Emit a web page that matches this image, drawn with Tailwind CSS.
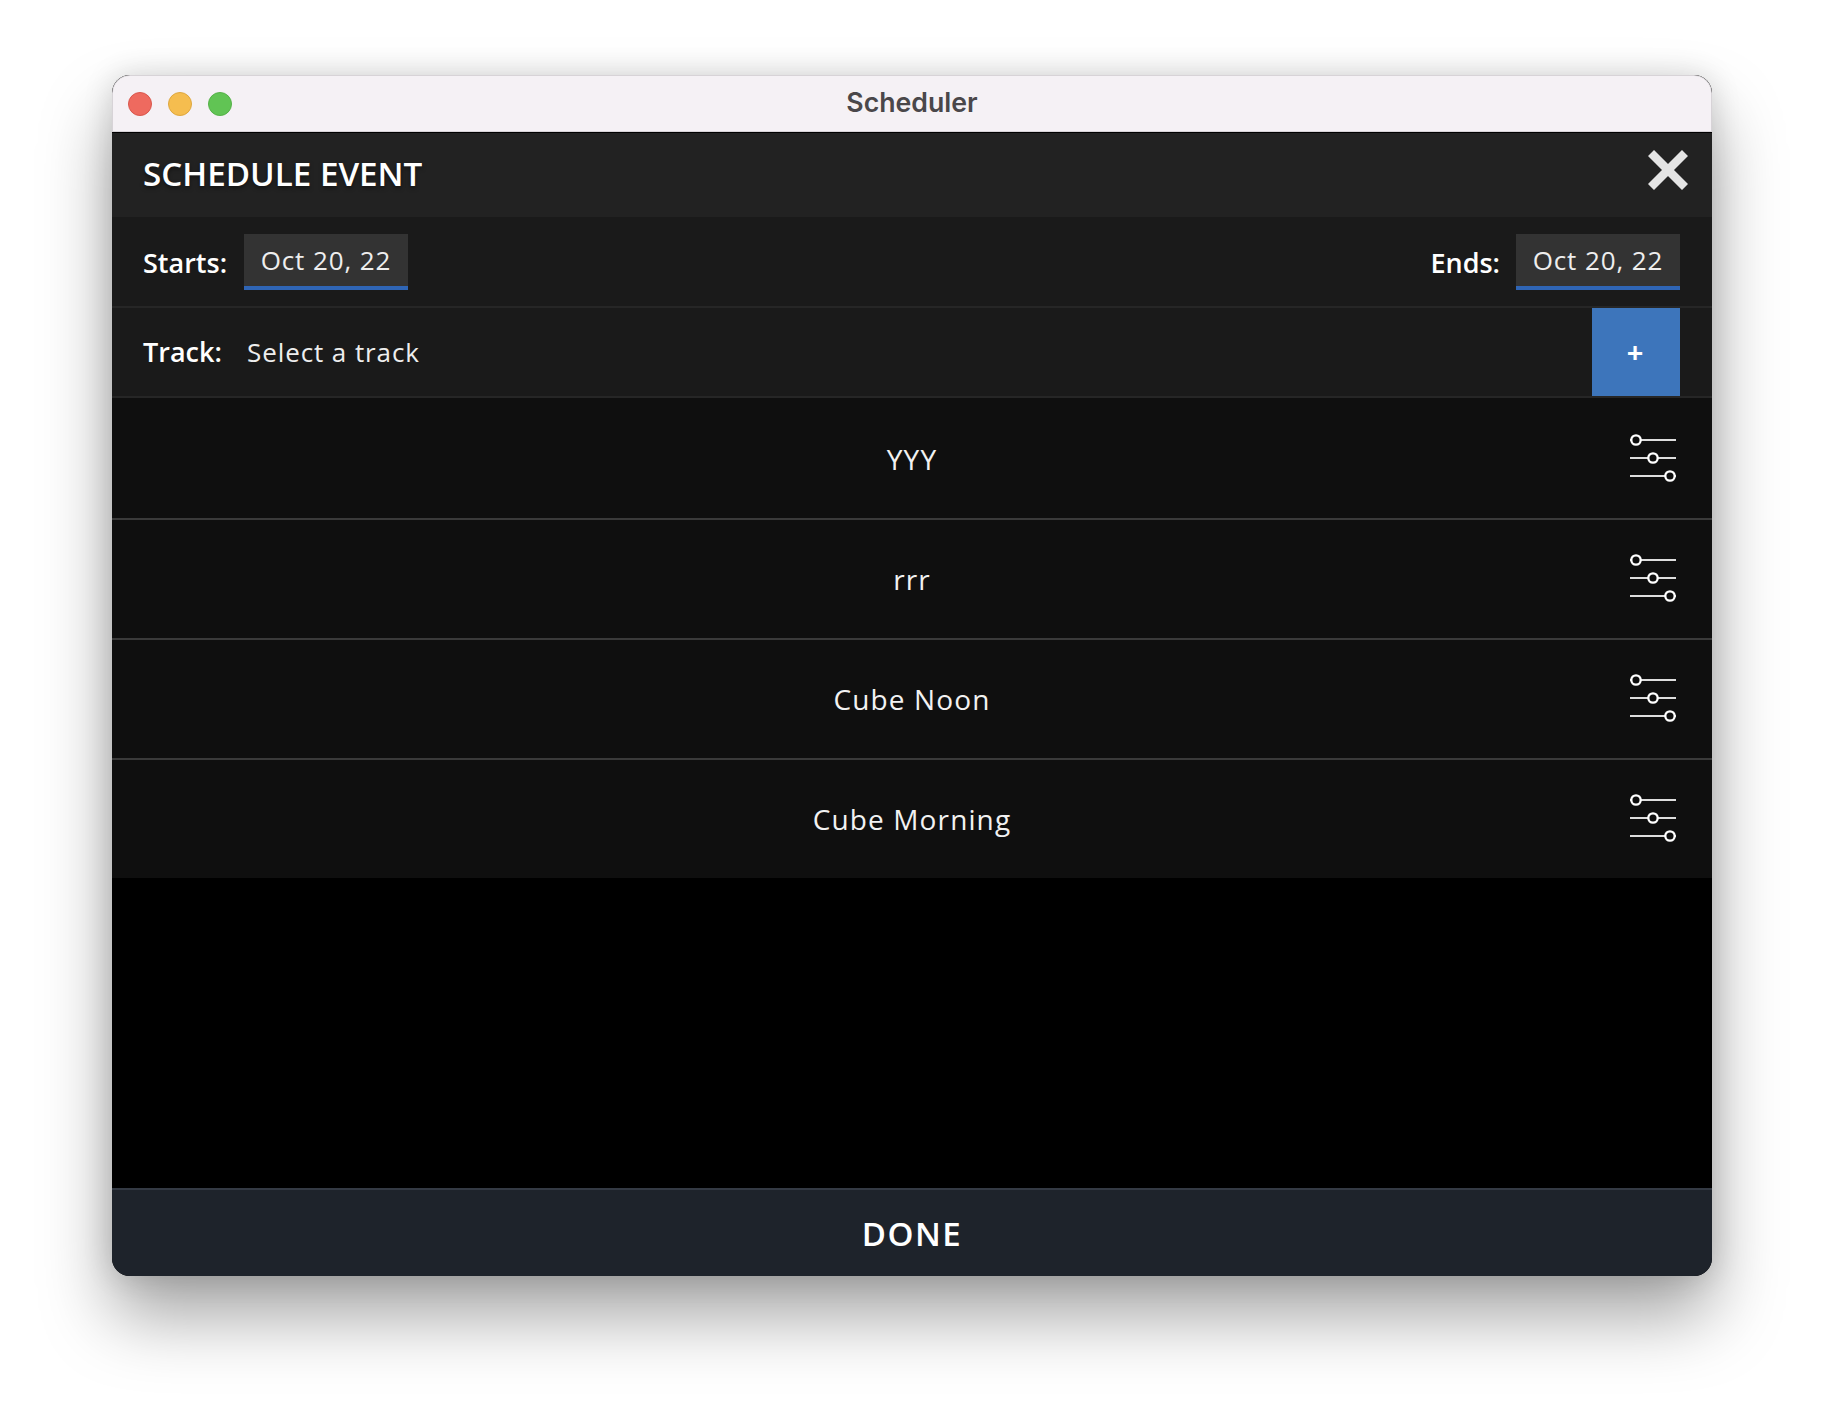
<!DOCTYPE html>
<html lang="en">
<head>
  <meta charset="UTF-8" />
  <title>Scheduler</title>
  <script src="https://cdn.jsdelivr.net/npm/@tailwindcss/browser@4"></script>
</head>
<body class="bg-white min-h-screen font-['Open_Sans',sans-serif] text-white">
  <div class="pt-[75px] pl-[112px]">
    <div class="w-[1600px] h-[1201px] flex flex-col rounded-[18px] overflow-hidden bg-black shadow-[0_40px_70px_rgba(0,0,0,0.36),0_0_30px_rgba(0,0,0,0.14)]">

      <!-- title bar -->
      <div class="relative h-[58px] shrink-0 flex items-center justify-center bg-[#f5f1f5] border-b border-black rounded-t-[18px] shadow-[inset_0_0_0_1px_rgba(0,0,0,0.12)]">
        <div class="absolute left-[16px] top-[17px] flex gap-[16px]">
          <span class="w-[24px] h-[24px] rounded-full bg-[#ee6a5f] border border-[#d9574d]"></span>
          <span class="w-[24px] h-[24px] rounded-full bg-[#f5bd4f] border border-[#dea73f]"></span>
          <span class="w-[24px] h-[24px] rounded-full bg-[#61c454] border border-[#55b148]"></span>
        </div>
        <span class="font-['Inter',sans-serif] font-semibold text-[26.7px] text-[#4a474a] -mt-[2px]">Scheduler</span>
      </div>

      <!-- header -->
      <div class="h-[84px] shrink-0 flex items-center justify-between pl-[31px] pr-[32px] bg-[#222222]">
        <h1 class="text-[33.2px] font-semibold -mt-[2px] [text-shadow:0_2px_4px_rgba(0,0,0,0.5)]">SCHEDULE EVENT</h1>
        <svg class="w-[40px] h-[40px] -mt-[10px] -mr-[8px]" viewBox="0 0 40 40"><path d="M3 3L37 37M37 3L3 37" stroke="#e4e4e4" stroke-width="8.5" fill="none" /></svg>
      </div>

      <!-- dates -->
      <div class="h-[91px] shrink-0 flex items-start justify-between pl-[31px] pr-[32px] pt-[17px] bg-[#1a1a1a] border-b-2 border-[#262626]">
        <div class="flex items-center">
          <span class="w-[101px] text-[27px] font-semibold pt-[2px]">Starts:</span>
          <span class="w-[164px] h-[56px] flex items-center justify-center bg-[#333333] border-b-4 border-[#2f65b5] text-[26px] tracking-[0.035em] text-[#eeeeee]">Oct 20, 22</span>
        </div>
        <div class="flex items-center gap-[16px]">
          <span class="text-[27px] font-semibold pt-[2px]">Ends:</span>
          <span class="w-[164px] h-[56px] flex items-center justify-center bg-[#333333] border-b-4 border-[#2f65b5] text-[26px] tracking-[0.035em] text-[#eeeeee]">Oct 20, 22</span>
        </div>
      </div>

      <!-- track -->
      <div class="h-[90px] shrink-0 flex items-start justify-between pl-[31px] pr-[32px] bg-[#1a1a1a] border-b-2 border-[#262626]">
        <div class="h-[88px] flex items-center">
          <span class="w-[104px] text-[27px] font-semibold">Track:</span>
          <span class="text-[26px] tracking-[0.035em] text-[#eeeeee]">Select a track</span>
        </div>
        <button class="w-[88px] h-[88px] flex items-center justify-center bg-[#3d75bb] text-[29px] font-bold pr-[2px]">+</button>
      </div>

      <!-- event list -->
      <div class="flex flex-col">
        <div class="relative h-[122px] flex items-center justify-center bg-[#0f0f0f] border-b-2 border-[#3a3a3a]">
          <span class="text-[28px] tracking-[0.04em] text-[#f2f2f2] pt-[2px]">YYY</span>
          <svg class="absolute right-[35px] top-[36px] w-[48px] h-[48px]" viewBox="0 0 48 48" fill="none" stroke="#dddddd" stroke-width="2"><path d="M1 6H47M1 24H47M1 42H47" /><circle cx="7" cy="6" r="4.7" fill="#0f0f0f" stroke="#ffffff" stroke-width="2.3" /><circle cx="24" cy="24" r="4.7" fill="#0f0f0f" stroke="#ffffff" stroke-width="2.3" /><circle cx="41" cy="42" r="4.7" fill="#0f0f0f" stroke="#ffffff" stroke-width="2.3" /></svg>
        </div>
        <div class="relative h-[120px] flex items-center justify-center bg-[#0f0f0f] border-b-2 border-[#3a3a3a]">
          <span class="text-[28px] tracking-[0.04em] text-[#f2f2f2]">rrr</span>
          <svg class="absolute right-[35px] top-[34px] w-[48px] h-[48px]" viewBox="0 0 48 48" fill="none" stroke="#dddddd" stroke-width="2"><path d="M1 6H47M1 24H47M1 42H47" /><circle cx="7" cy="6" r="4.7" fill="#0f0f0f" stroke="#ffffff" stroke-width="2.3" /><circle cx="24" cy="24" r="4.7" fill="#0f0f0f" stroke="#ffffff" stroke-width="2.3" /><circle cx="41" cy="42" r="4.7" fill="#0f0f0f" stroke="#ffffff" stroke-width="2.3" /></svg>
        </div>
        <div class="relative h-[120px] flex items-center justify-center bg-[#0f0f0f] border-b-2 border-[#3a3a3a]">
          <span class="text-[28px] tracking-[0.04em] text-[#f2f2f2]">Cube Noon</span>
          <svg class="absolute right-[35px] top-[34px] w-[48px] h-[48px]" viewBox="0 0 48 48" fill="none" stroke="#dddddd" stroke-width="2"><path d="M1 6H47M1 24H47M1 42H47" /><circle cx="7" cy="6" r="4.7" fill="#0f0f0f" stroke="#ffffff" stroke-width="2.3" /><circle cx="24" cy="24" r="4.7" fill="#0f0f0f" stroke="#ffffff" stroke-width="2.3" /><circle cx="41" cy="42" r="4.7" fill="#0f0f0f" stroke="#ffffff" stroke-width="2.3" /></svg>
        </div>
        <div class="relative h-[118px] flex items-center justify-center bg-[#0f0f0f]">
          <span class="text-[28px] tracking-[0.04em] text-[#f2f2f2]">Cube Morning</span>
          <svg class="absolute right-[35px] top-[34px] w-[48px] h-[48px]" viewBox="0 0 48 48" fill="none" stroke="#dddddd" stroke-width="2"><path d="M1 6H47M1 24H47M1 42H47" /><circle cx="7" cy="6" r="4.7" fill="#0f0f0f" stroke="#ffffff" stroke-width="2.3" /><circle cx="24" cy="24" r="4.7" fill="#0f0f0f" stroke="#ffffff" stroke-width="2.3" /><circle cx="41" cy="42" r="4.7" fill="#0f0f0f" stroke="#ffffff" stroke-width="2.3" /></svg>
        </div>
      </div>

      <div class="flex-1 bg-black"></div>

      <!-- footer -->
      <button class="h-[88px] shrink-0 flex items-center justify-center bg-[#1e232b] border-t-2 border-[#343a44] text-[33px] font-semibold tracking-[0.045em] pt-[2px]">DONE</button>
    </div>
  </div>
</body>
</html>
